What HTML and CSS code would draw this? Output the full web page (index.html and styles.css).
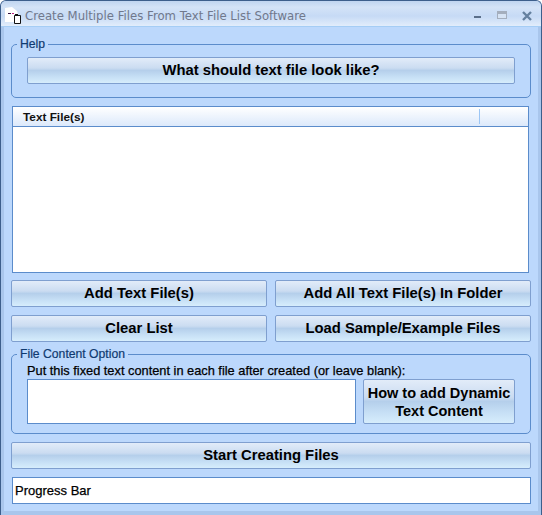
FILE: index.html
```html
<!DOCTYPE html>
<html lang="en">

<head>
    <meta charset="UTF-8">
    <meta name="viewport" content="width=device-width, initial-scale=1.0">
    <title>Create Multiple Files From Text File List Software</title>
    <link rel="stylesheet" href="styles.css">
</head>

<body>
    <div class="window">
        <div class="title_bar">
            <svg class="app_icon" width="18" height="18" viewBox="0 0 18 18">
                <path d="M1 1 L8 0 L13 4 L14 7 L10 8 L10 15 L1 15 Z" fill="#fff" />
                <path d="M4 6.500 H7" stroke="#301040" stroke-width="1" />
                <path d="M8 6.500 H10" stroke="#c02080" stroke-width="1" />
                <path d="M10.500 8.500 H13 L16.500 8.500 V16.500 H10.500 Z" fill="#fff" stroke="#111" stroke-width="1" />
                <path d="M11 7.500 H14" stroke="#111" stroke-width="1" />
            </svg>
            <span class="title_text">Create Multiple Files From Text File List Software</span>
            <div class="win_btns">
                <svg class="win_min" width="8" height="10" viewBox="0 0 8 10"><rect x="0" y="5" width="7" height="2" fill="#5b6f8a" /></svg>
                <svg class="win_max" width="10" height="10" viewBox="0 0 10 10"><rect x="0.500" y="0.500" width="9" height="7" fill="#d6e3f4" stroke="#a4aebd" /><rect x="1" y="1" width="8" height="2" fill="#a4aebd" /></svg>
                <svg class="win_close" width="10" height="10" viewBox="0 0 10 10"><path d="M1 1 L9 9 M9 1 L1 9" stroke="#65809f" stroke-width="2.400" /></svg>
            </div>
        </div>

        <div class="content">
            <fieldset class="group help_group">
                <legend>Help</legend>
                <button class="btn help_btn">What should text file look like?</button>
            </fieldset>

            <div class="list_box">
                <div class="list_head">
                    <span class="col_name">Text File(s)</span>
                    <span class="col_rest"></span>
                </div>
            </div>

            <div class="btn_grid">
                <button class="btn">Add Text File(s)</button>
                <button class="btn">Add All Text File(s) In Folder</button>
                <button class="btn">Clear List</button>
                <button class="btn">Load Sample/Example Files</button>
            </div>

            <fieldset class="group option_group">
                <legend>File Content Option</legend>
                <p class="option_label">Put this fixed text content in each file after created (or leave blank):</p>
                <div class="option_row">
                    <div class="text_input"></div>
                    <button class="btn dynamic_btn">How to add Dynamic<br>Text Content</button>
                </div>
            </fieldset>

            <button class="btn start_btn">Start Creating Files</button>

            <div class="progress">Progress Bar</div>
        </div>
    </div>
</body>

</html>
```

FILE: styles.css
```css
* {box-sizing: border-box;}

html, body {margin: 0; padding: 0;}

body {width: 542px; height: 515px; overflow: hidden; font-family: "Liberation Sans", Arial, sans-serif; color: #000;}

.window {
    width: 542px;
    height: 515px;
    background: #bcd8fc;
    border: 1px solid #3d5f8c;
    border-bottom: 0;
    border-radius: 6px 6px 0 0;
    display: flex;
    flex-direction: column;
    box-shadow: inset 3px 0 0 #a9c6ec, inset -3px 0 0 #a9c6ec, inset 0 -4px 0 #a9c6ec;
}

.title_bar {
    height: 26px;
    flex: none;
    display: flex;
    align-items: center;
    padding: 4px 0 0 3px;
    border-bottom: 1px solid #a5cdf5;
    border-radius: 5px 5px 0 0;
    background: linear-gradient(#c0d5f0 0, #d4e3f7 25%, #c6daf5 60%, #e2edfb 100%);
}

.app_icon {flex: none; margin-right: 3px;}

.title_text {font-family: "DejaVu Sans", sans-serif; font-size: 11.7px; color: #70788c;}

.win_btns {margin-left: auto; width: 67px; display: flex; align-items: center;}

.win_min {margin-right: 15px;}

.win_max {margin-right: 15px;}

.content {flex: 1; display: flex; flex-direction: column; padding: 10px 10px 0;}

.btn {
    display: block;
    margin: 0;
    padding: 0 0 2px;
    font-family: "Liberation Sans", Arial, sans-serif;
    font-size: 14.8px;
    font-weight: bold;
    color: #000;
    border: 1px solid #7f9fcf;
    border-radius: 2px;
    background: linear-gradient(#e2ecf9 0, #cbdcf1 40%, #b5cfeb 50%, #c6dff5 75%, #d6edfc 100%);
}

.group {margin: 0; padding: 0 15px; border: 1px solid #5b8ccb; border-radius: 5px; min-width: 0;}

.group legend {margin-left: -10px; padding: 0 3px; font-size: 12.2px; line-height: 14px; color: #0f3a70; -webkit-text-stroke: 0.2px #0f3a70;}

.help_group {height: 61px; padding-top: 6px;}

.help_btn {width: 488px; height: 27px;}

.list_box {
    height: 167px;
    margin: 8px 2px 0 1px;
    background: #fff;
    border: 1px solid #5b8ccb;
}

.list_head {
    height: 20px;
    display: flex;
    border-bottom: 1px solid #5b8ccb;
    background: linear-gradient(#fff 0, #dce9fb 100%);
    font-size: 11.8px;
    font-weight: bold;
    color: #111;
}

.col_name {width: 467px; padding-left: 10px; border-right: 1px solid #9cc6f5; height: 15px; margin-top: 2px; line-height: 16px;}

.col_rest {flex: 1;}

.btn_grid {display: grid; grid-template-columns: 256px 256px; gap: 8px; margin-top: 7px;}

.btn_grid .btn {height: 27px;}

.option_group {height: 87px; margin-top: 5px;}

.option_label {margin: 3px 0 0; font-size: 12.8px; line-height: 14px; -webkit-text-stroke: 0.25px #000;}

.option_row {display: flex; gap: 7px; margin-top: 1px;}

.text_input {width: 329px; height: 45px; background: #fff; border: 1px solid #5b8ccb;}

.dynamic_btn {width: 152px; height: 45px; line-height: 18px; padding: 0; font-size: 14.5px;}

.start_btn {width: 520px; height: 27px; margin-top: 8px;}

.progress {
    width: 519px;
    height: 27px;
    margin: 8px 0 0 1px;
    padding-left: 2px;
    background: #fff;
    border: 1px solid #5b8ccb;
    font-size: 13px;
    line-height: 25px;
    -webkit-text-stroke: 0.25px #000;
}
```
